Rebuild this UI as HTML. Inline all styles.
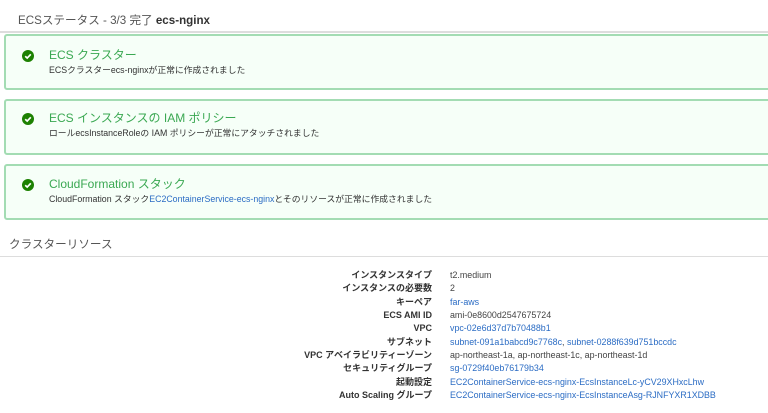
<!DOCTYPE html>
<html><head><meta charset="utf-8"><style>
body{margin:0;width:768px;height:413px;overflow:hidden;background:#fff;font-family:"Liberation Sans","Noto Sans CJK JP",sans-serif;color:#444;position:relative}
.a{position:absolute;white-space:nowrap;line-height:12px}
.hr{position:absolute;left:0;width:768px;height:1px;background:#ddd}
.box{position:absolute;left:4px;width:780px;border:2px solid #a3dcb3;border-radius:3px;background:#f6fff8;box-sizing:border-box}
.t{position:absolute;left:49px;font-size:12px;color:#3aa852;line-height:14px}
.s{position:absolute;left:49px;font-size:8.8px;color:#333}
a{color:#2b6cc4;text-decoration:none}
.lbl{position:absolute;right:336px;font-size:9px;font-weight:bold;color:#333;text-align:right}
.val{position:absolute;left:450px;font-size:8.9px;color:#444}
</style></head><body>
<div class="a" style="left:18px;top:14px;font-size:11.6px;line-height:14px;color:#555">ECSステータス - 3/3 完了 <b style="color:#333">ecs-nginx</b></div>
<div class="hr" style="top:31px;height:2px"></div>

<div class="box" style="top:34px;height:56px"></div>
<svg class="a" style="left:22px;top:50px" width="12" height="12" viewBox="0 0 12 12"><circle cx="6" cy="6" r="6" fill="#1d8102"/><path d="M3.2 6.2L5.2 8.1L8.8 4.3" stroke="#fff" stroke-width="1.7" fill="none"/></svg>
<div class="a t" style="top:48px">ECS クラスター</div>
<div class="a s" style="top:64px">ECSクラスターecs-nginxが正常に作成されました</div>

<div class="box" style="top:99px;height:56px"></div>
<svg class="a" style="left:22px;top:113px" width="12" height="12" viewBox="0 0 12 12"><circle cx="6" cy="6" r="6" fill="#1d8102"/><path d="M3.2 6.2L5.2 8.1L8.8 4.3" stroke="#fff" stroke-width="1.7" fill="none"/></svg>
<div class="a t" style="top:111px">ECS インスタンスの IAM ポリシー</div>
<div class="a s" style="top:127px">ロールecsInstanceRoleの IAM ポリシーが正常にアタッチされました</div>

<div class="box" style="top:164px;height:56px"></div>
<svg class="a" style="left:22px;top:179px" width="12" height="12" viewBox="0 0 12 12"><circle cx="6" cy="6" r="6" fill="#1d8102"/><path d="M3.2 6.2L5.2 8.1L8.8 4.3" stroke="#fff" stroke-width="1.7" fill="none"/></svg>
<div class="a t" style="top:177px">CloudFormation スタック</div>
<div class="a s" style="top:193px">CloudFormation スタック<a>EC2ContainerService-ecs-nginx</a>とそのリソースが正常に作成されました</div>

<div class="a" style="left:9px;top:238px;font-size:11.6px;line-height:14px;color:#555">クラスターリソース</div>
<div class="hr" style="top:256px"></div>

<div class="a lbl" style="top:269px">インスタンスタイプ</div><div class="a val" style="top:269px">t2.medium</div>
<div class="a lbl" style="top:282px">インスタンスの必要数</div><div class="a val" style="top:282px">2</div>
<div class="a lbl" style="top:296px">キーペア</div><div class="a val" style="top:296px"><a>far-aws</a></div>
<div class="a lbl" style="top:309px">ECS AMI ID</div><div class="a val" style="top:309px">ami-0e8600d2547675724</div>
<div class="a lbl" style="top:322px">VPC</div><div class="a val" style="top:322px"><a>vpc-02e6d37d7b70488b1</a></div>
<div class="a lbl" style="top:336px">サブネット</div><div class="a val" style="top:336px"><a>subnet-091a1babcd9c7768c</a>, <a>subnet-0288f639d751bccdc</a></div>
<div class="a lbl" style="top:349px">VPC アベイラビリティーゾーン</div><div class="a val" style="top:349px">ap-northeast-1a, ap-northeast-1c, ap-northeast-1d</div>
<div class="a lbl" style="top:362px">セキュリティグループ</div><div class="a val" style="top:362px"><a>sg-0729f40eb76179b34</a></div>
<div class="a lbl" style="top:376px">起動設定</div><div class="a val" style="top:376px"><a>EC2ContainerService-ecs-nginx-EcsInstanceLc-yCV29XHxcLhw</a></div>
<div class="a lbl" style="top:389px">Auto Scaling グループ</div><div class="a val" style="top:389px"><a>EC2ContainerService-ecs-nginx-EcsInstanceAsg-RJNFYXR1XDBB</a></div>
</body></html>
